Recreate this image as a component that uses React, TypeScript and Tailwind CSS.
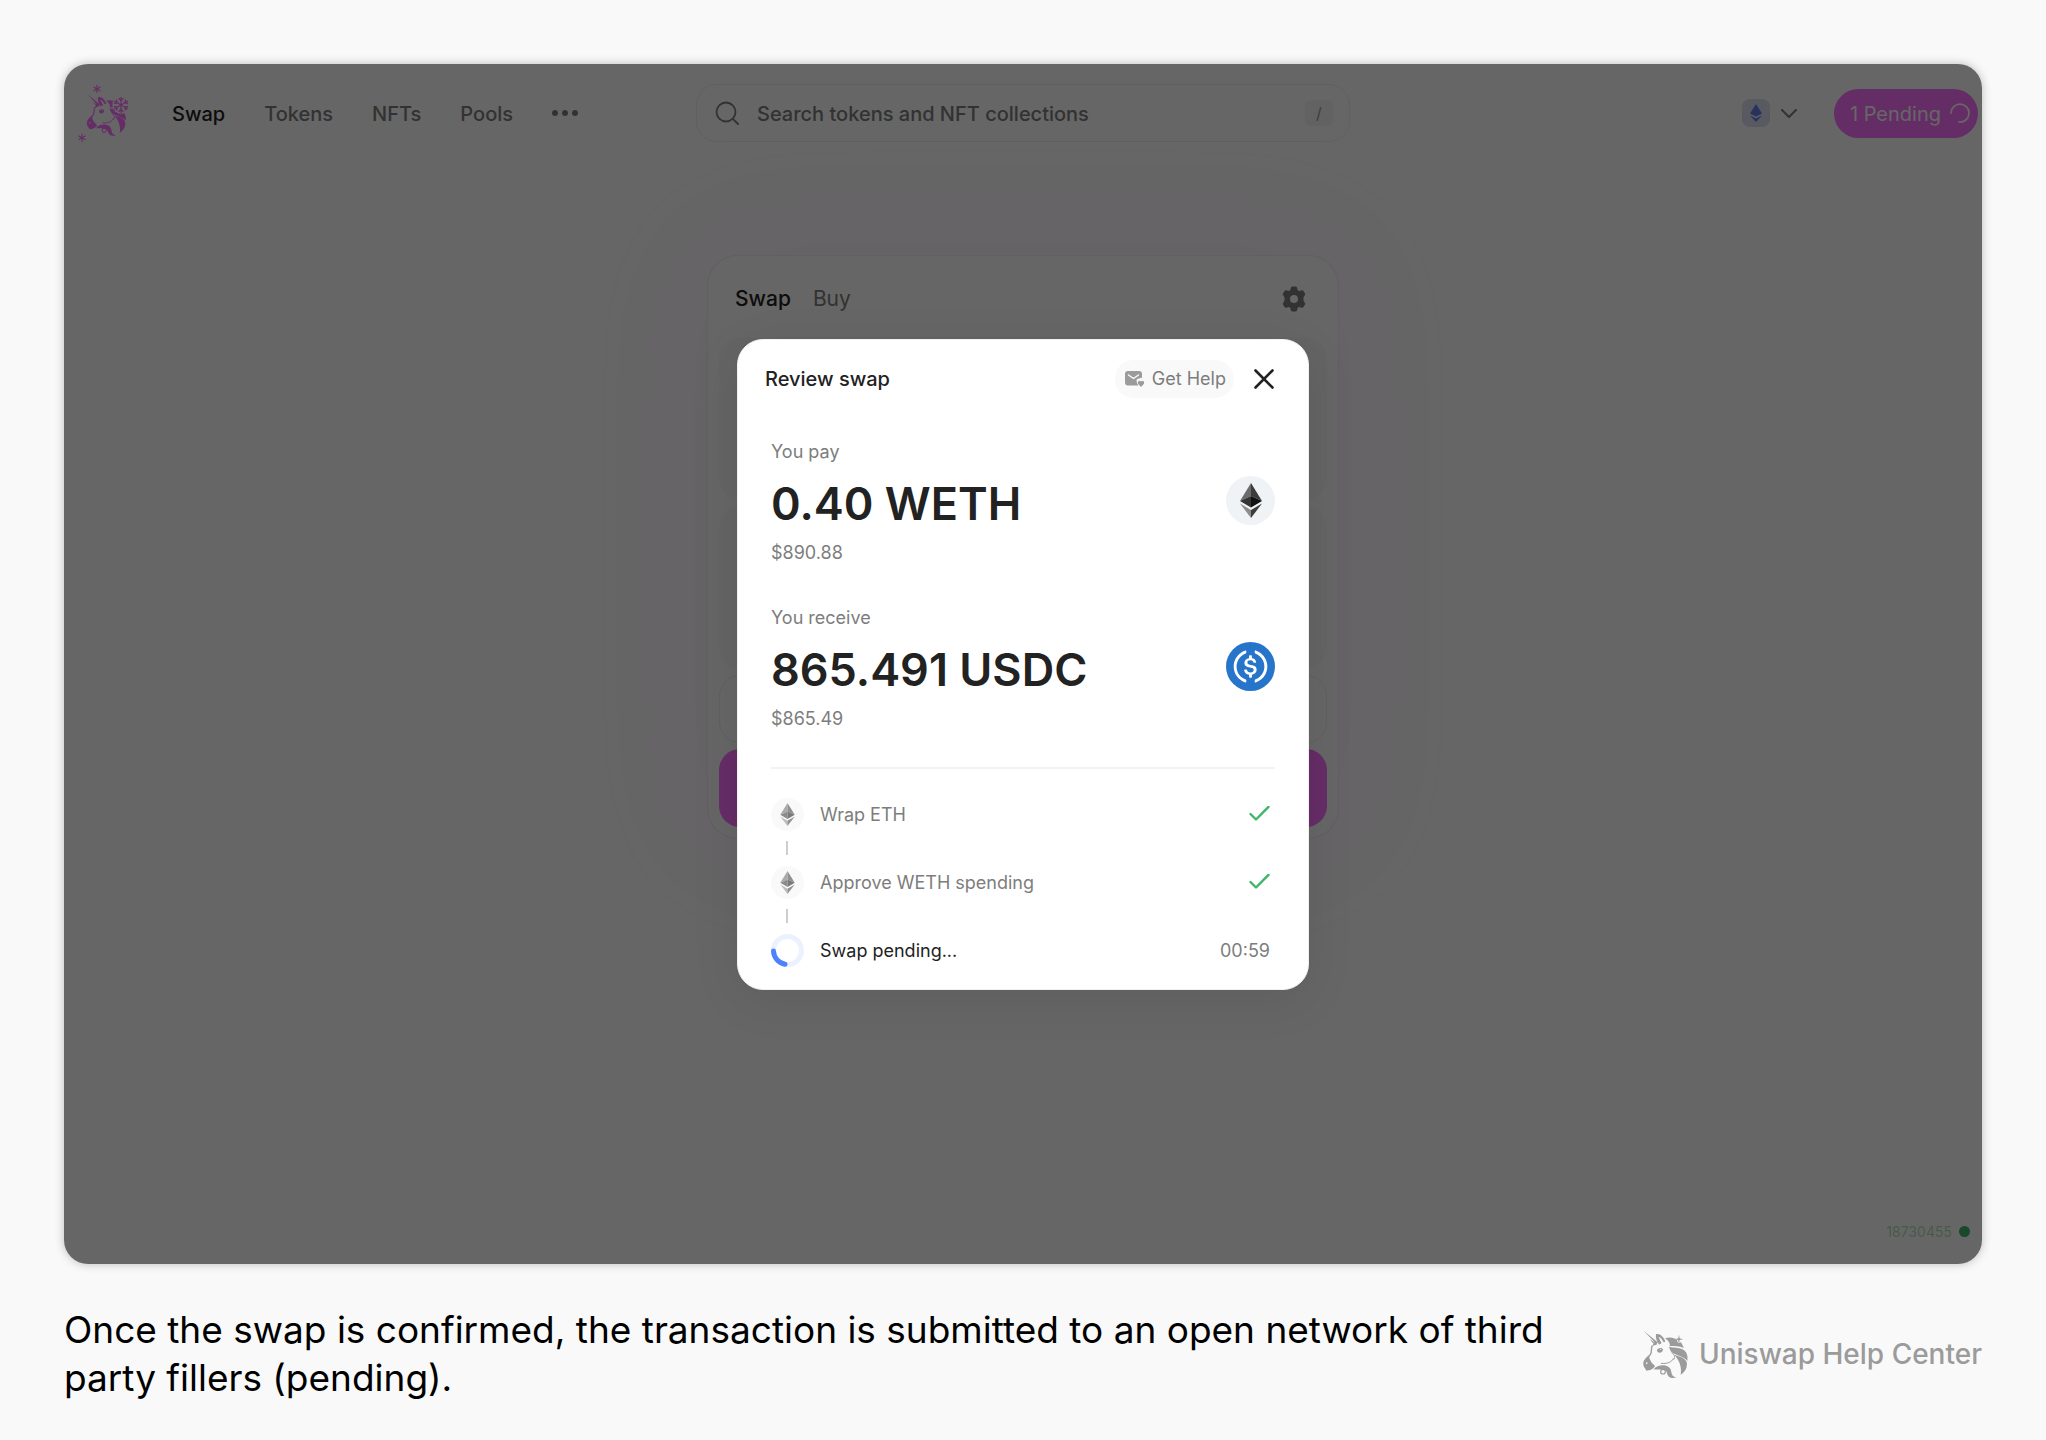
import type { ReactNode } from 'react';

interface Amount {
  label: string;
  amount: string;
  fiat: string;
  icon: ReactNode;
}

interface Step {
  title: string;
  status: 'done' | 'pending';
}

const navLinks = ['Swap', 'Tokens', 'NFTs', 'Pools'];

function UnicornShapes() {
  return (
    <g fill="currentColor">
      <path d="M20 14 L62 49 L58 57 C52 57 48 59 45 63 C46 58 48 55 50 53 C46 49 42 43 38 38 C43 42 48 47 53 49 Z" />
      <path d="M57 25 C68 21 80 32 85 47 L80 49 C75 39 70 34 65 33 C67 39 70 45 74 51 L66 56 C59 46 55 36 57 25 Z" />
      <path
        d="M46 59 C41 68 45 76 41 84 C37 92 26 97 22 108"
        fill="none"
        stroke="currentColor"
        strokeWidth="4"
      />
      <path
        fillRule="evenodd"
        d="M38 86 C26 95 17 104 19 116 C20 124 25 126 28 134 C38 134 50 129 54 120 C48 113 43 111 40 103 C37 97 36 93 38 86 Z M30 108 C33 110 31 114 28 115 C26 112 27 110 30 108 Z"
      />
      <path
        fillRule="evenodd"
        d="M60 72 C63 65 74 63 78 70 C78 77 73 80 68 80 C63 80 60 77 60 72 Z M71 69 A2 1.500 0 1 0 71 72 A2 1.500 0 1 0 71 69 Z"
      />
      <path
        d="M72 112 C90 114 104 109 109 97 M110 101 C115 92 113 86 104 80"
        fill="none"
        stroke="currentColor"
        strokeWidth="3"
      />
      <path d="M84 37 C98 32 112 35 120 42 L123 51 L132 49 L141 66 C126 60 112 60 98 60 C100 50 92 42 84 37 Z" />
      <path d="M126 26 L128 37 L138 40 L128 42 L126 53 L123 42 L114 39 L124 37 Z" />
      <path d="M96 62 C112 67 136 61 147 79 C152 88 152 96 151 105 C140 91 118 89 104 79 C100 74 98 69 96 62 Z" />
      <path d="M112 87 C130 91 144 97 149 108 C152 122 146 137 131 146 C135 124 127 102 112 87 Z" />
      <path d="M50 130 C58 119 74 116 87 119 C98 122 102 129 103 139 C104 147 108 153 118 154 C104 160 92 153 90 141 C88 134 84 131 79 131 C68 129 60 132 50 130 Z" />
      <circle cx="78" cy="137" r="7" fill="none" stroke="currentColor" strokeWidth="3.500" />
    </g>
  );
}

function Snowflake({ x, y, r }: { x: number; y: number; r: number }) {
  const large = r > 15;
  return (
    <g transform={`translate(${x} ${y}) scale(${r / 10})`} stroke="currentColor" strokeWidth={large ? 1.6 : 3} fill="none">
      {[0, 60, 120, 180, 240, 300].map((a) => (
        <path key={a} transform={`rotate(${a})`} d={large ? 'M0 0V-10M-3 -8.5L0 -5.5L3 -8.5' : 'M0 0V-10'} />
      ))}
    </g>
  );
}

function HolidayLogo() {
  return (
    <svg viewBox="0 0 210 225" className="h-[75px] w-[70px] text-[#fc72ff]" aria-hidden="true">
      <mask id="flake-gap">
        <rect width="210" height="225" fill="#fff" />
        <circle cx="153" cy="87" r="26" fill="#000" />
      </mask>
      <g mask="url(#flake-gap)">
        <g transform="translate(34 42) scale(.88)">
          <UnicornShapes />
        </g>
      </g>
      <Snowflake x={153} y={87} r={24} />
      <Snowflake x={81} y={39} r={12} />
      <Snowflake x={36} y={185} r={12} />
    </svg>
  );
}

function EthDiamond({ className }: { className: string }) {
  return (
    <svg viewBox="0 0 22 35" className={className} aria-hidden="true">
      <path d="M11 0 L0 18 L11 13 Z" fill="#6b6b6b" />
      <path d="M11 0 L22 18 L11 13 Z" fill="#3c3c3b" />
      <path d="M0 18 L11 13 V24.500 Z" fill="#343434" />
      <path d="M22 18 L11 13 V24.500 Z" fill="#111111" />
      <path d="M0 20.500 L11 27 V35 Z" fill="#8c8c8c" />
      <path d="M22 20.500 L11 27 V35 Z" fill="#3c3c3b" />
    </svg>
  );
}

function UsdcIcon() {
  return (
    <svg viewBox="0 0 32 32" className="size-[49px]" aria-hidden="true">
      <circle cx="16" cy="16" r="16" fill="#2775ca" />
      <path
        fill="#fff"
        d="M20.022 18.124c0-2.124-1.280-2.852-3.840-3.156-1.828-.243-2.193-.728-2.193-1.578 0-.85.61-1.396 1.828-1.396 1.097 0 1.707.364 2.011 1.275a.458.458 0 00.427.303h.975a.416.416 0 00.427-.425v-.06a3.040 3.040 0 00-2.743-2.489V9.142c0-.243-.183-.425-.487-.486h-.915c-.243 0-.426.182-.487.486v1.396c-1.829.242-2.986 1.456-2.986 2.974 0 2.002 1.218 2.791 3.778 3.095 1.707.303 2.255.668 2.255 1.639 0 .97-.853 1.638-2.011 1.638-1.585 0-2.133-.667-2.316-1.578-.06-.242-.244-.364-.427-.364h-1.036a.416.416 0 00-.426.425v.06c.243 1.518 1.219 2.610 3.230 2.914v1.457c0 .242.183.425.487.485h.915c.243 0 .426-.182.487-.485V21.340c1.829-.303 3.047-1.578 3.047-3.217z"
      />
      <path
        fill="#fff"
        d="M12.892 24.497c-4.754-1.700-7.192-6.980-5.424-11.653.914-2.550 2.925-4.491 5.424-5.402.244-.121.365-.303.365-.607v-.85c0-.242-.121-.424-.365-.485-.061 0-.183 0-.244.060a10.895 10.895 0 00-7.130 13.717c1.096 3.400 3.717 6.010 7.130 7.102.244.121.488 0 .548-.243.061-.060.061-.122.061-.243v-.850c0-.182-.182-.424-.365-.546zm6.460-18.936c-.244-.122-.488 0-.548.242-.061.061-.061.122-.061.243v.850c0 .243.182.485.365.607 4.754 1.700 7.192 6.980 5.424 11.653-.914 2.550-2.925 4.491-5.424 5.402-.244.121-.365.303-.365.607v.850c0 .242.121.424.365.485.061 0 .183 0 .244-.060a10.895 10.895 0 007.130-13.717c-1.096-3.460-3.778-6.070-7.130-7.162z"
      />
    </svg>
  );
}

const amounts: Amount[] = [
  {
    label: 'You pay',
    amount: '0.40 WETH',
    fiat: '$890.88',
    icon: (
      <span className="flex size-[49px] items-center justify-center rounded-full bg-[#eff3f6]">
        <EthDiamond className="h-[35px] w-[22px]" />
      </span>
    ),
  },
  { label: 'You receive', amount: '865.491 USDC', fiat: '$865.49', icon: <UsdcIcon /> },
];

const steps: Step[] = [
  { title: 'Wrap ETH', status: 'done' },
  { title: 'Approve WETH spending', status: 'done' },
  { title: 'Swap pending...', status: 'pending' },
];

function Header() {
  return (
    <header className="grid h-[98px] grid-cols-[1fr_654px_1fr] items-center">
      <div className="flex items-center pl-[6px]">
        <HolidayLogo />
        <nav className="ml-8 flex items-center gap-[39px] text-[20px] font-medium text-[#7d7d7d]">
          {navLinks.map((link) => (
            <a key={link} href="#" className={link === 'Swap' ? 'pt-[2px] text-[#222222]' : 'pt-[2px]'}>
              {link}
            </a>
          ))}
          <button type="button" aria-label="More" className="flex gap-1">
            <span className="size-[6px] rounded-full bg-[#7d7d7d]" />
            <span className="size-[6px] rounded-full bg-[#7d7d7d]" />
            <span className="size-[6px] rounded-full bg-[#7d7d7d]" />
          </button>
        </nav>
      </div>

      <label className="flex h-[58px] items-center rounded-[21px] border border-[#22222212] pr-4 pl-[18px]">
        <svg viewBox="0 0 24 24" className="size-6 shrink-0 text-[#7d7d7d]" fill="none" stroke="currentColor" strokeWidth="1.8">
          <circle cx="11" cy="11" r="9.500" />
          <path d="M18 18 L23 23" strokeLinecap="round" />
        </svg>
        <input
          type="text"
          aria-label="Search tokens and NFT collections"
          placeholder="Search tokens and NFT collections"
          className="ml-[18px] min-w-0 flex-1 bg-transparent pt-[2px] text-[20px] font-medium outline-none placeholder:text-[#7d7d7d]"
        />
        <kbd className="flex h-[26px] w-7 items-center justify-center rounded-md bg-[#2222220d] font-[Inter] text-base text-[#9b9b9b]">/</kbd>
      </label>

      <div className="flex items-center justify-end pr-1">
        <button type="button" aria-label="Ethereum network" className="flex items-center gap-[11px]">
          <span className="flex size-7 items-center justify-center rounded-lg bg-[#dcdff2]">
            <svg viewBox="0 0 12 18" className="h-[18px] w-3" fill="#627eea">
              <path d="M6 0 L12 9.500 L6 12.500 L0 9.500 Z" />
              <path d="M0 11.500 L6 14.500 L12 11.500 L6 18 Z" />
            </svg>
          </span>
          <svg viewBox="0 0 16 9" className="h-[9px] w-4" fill="none" stroke="#7d7d7d" strokeWidth="2" strokeLinecap="round" strokeLinejoin="round">
            <path d="M1 1 L8 8 L15 1" />
          </svg>
        </button>
        <button
          type="button"
          className="ml-[37px] flex h-[49px] w-36 items-center justify-end gap-[9px] rounded-full bg-[#fc72ff] pr-2 text-[20px] whitespace-nowrap text-white"
        >
          <span className="pt-[2px]">1 Pending</span>
          <svg viewBox="0 0 20 20" className="size-5" fill="none" stroke="currentColor" strokeWidth="1.8" strokeLinecap="round">
            <path d="M1 10 A9 9 0 1 1 9 19" />
          </svg>
        </button>
      </div>
    </header>
  );
}

function SwapCard() {
  return (
    <section className="mx-auto mt-[93px] flex w-[632px] flex-col gap-[6px] rounded-[31px] border border-[#22222212] bg-white px-[11px] pb-[11px] shadow-[0_0_130px_20px_#fc72ff16]">
      <div className="flex h-[75px] items-center pt-[10px] pr-5 pl-4 text-[21px] font-medium">
        <button type="button" className="text-[#222222]">Swap</button>
        <button type="button" className="ml-[22px] font-normal text-[#7d7d7d]">Buy</button>
        <button type="button" aria-label="Settings" className="ml-auto">
          <svg viewBox="0 0 26 26" className="size-[26px]">
            <path
              fill="#7d7d7d"
              fillRule="evenodd"
              d="M10 1.500 Q10.300 .5 11.500 .5 H14.500 Q15.700 .5 16 1.500 L16.800 4.200 L18 4.900 L20.800 4.200 Q21.900 4 22.500 4.900 L24 7.500 Q24.600 8.500 23.800 9.300 L22.500 11.300 V14.700 L23.800 16.700 Q24.600 17.500 24 18.500 L22.500 21.100 Q21.900 22 20.800 21.800 L18 21.100 L16.800 21.800 L16 24.500 Q15.700 25.500 14.500 25.500 H11.500 Q10.300 25.500 10 24.500 L9.200 21.800 L8 21.100 L5.200 21.800 Q4.100 22 3.500 21.100 L2 18.500 Q1.400 17.500 2.200 16.700 L3.500 14.700 V11.300 L2.200 9.300 Q1.400 8.500 2 7.500 L3.500 4.900 Q4.100 4 5.200 4.200 L8 4.900 L9.200 4.200 Z M13 9 A4 4 0 1 0 13 17 A4 4 0 1 0 13 9 Z"
            />
          </svg>
        </button>
      </div>
      <div className="h-[163px] rounded-[21px] bg-[#f9f9f9]" />
      <div className="h-[163px] rounded-[21px] bg-[#f9f9f9]" />
      <div className="h-[68px] rounded-[21px] border border-[#22222212]" />
      <button type="button" aria-label="Swap" className="h-[78px] rounded-[21px] bg-[#fc72ff]" />
    </section>
  );
}

function StepRow({ step, last }: { step: Step; last: boolean }) {
  const done = step.status === 'done';
  return (
    <li>
      <div className="flex h-[33px] items-center pr-[5px] text-[18px]">
        {done ? (
          <span className="flex size-[33px] items-center justify-center rounded-full bg-[#f9f9f9]">
            <EthDiamond className="h-[23px] w-[15px] opacity-55" />
          </span>
        ) : (
          <svg viewBox="0 0 33 33" className="size-[33px]" fill="none" strokeWidth="5">
            <circle cx="16.500" cy="16.500" r="14" stroke="#ebf1ff" />
            <path d="M2.500 17 A14 14 0 0 0 14 30.300" stroke="#4c82fb" strokeLinecap="round" />
          </svg>
        )}
        <span className={`ml-4 ${done ? 'text-[#7d7d7d]' : 'text-[#222222]'}`}>{step.title}</span>
        {done ? (
          <svg viewBox="0 0 21 16" className="ml-auto h-4 w-[21px]" fill="none" stroke="#40b66b" strokeWidth="2.400" strokeLinecap="round" strokeLinejoin="round">
            <path d="M1.500 8 L7 13.500 L19.500 .8" />
          </svg>
        ) : (
          <time className="ml-auto text-[#7d7d7d]">00:59</time>
        )}
      </div>
      {!last && (
        <div className="flex h-[35px] w-8 items-center justify-center">
          <span className="h-[14px] w-[2px] bg-[#cecece]" />
        </div>
      )}
    </li>
  );
}

function ReviewModal() {
  return (
    <div
      role="dialog"
      aria-label="Review swap"
      className="w-[572px] rounded-[26px] border border-[#f0f0f0] bg-white pb-[22px] shadow-[0_10px_50px_#00000014]"
    >
      <div className="flex h-[78px] items-center pr-[34px] pl-[27px]">
        <h2 className="text-[20px] font-medium text-[#222222]">Review swap</h2>
        <button
          type="button"
          className="ml-auto flex h-[38px] items-center gap-[7px] rounded-full bg-[#f9f9f9] pr-2 pl-[10px] text-[18px] text-[#7d7d7d]"
        >
          <svg viewBox="0 0 20 16" className="h-4 w-5" fill="none">
            <path fill="#9b9b9b" d="M3 0 H14 Q17 0 17 3 V7 Q15.500 6.500 14.500 7.500 Q12 7 11.500 9.500 Q11.500 12 13.500 14.500 H3 Q0 14.500 0 11.500 V3 Q0 0 3 0 Z" />
            <path stroke="#f9f9f9" strokeWidth="1.500" strokeLinecap="round" strokeLinejoin="round" d="M3.500 4 L8.500 7.500 L13.500 4" />
            <path fill="#9b9b9b" d="M16 16 L13.200 13 Q12.400 11.600 13.200 10.400 Q14.600 9 16 10.600 Q17.400 9 18.800 10.400 Q19.600 11.600 18.800 13 Z" />
          </svg>
          Get Help
        </button>
        <button type="button" aria-label="Close" className="ml-5">
          <svg viewBox="0 0 20 20" className="size-5" stroke="#222222" strokeWidth="2.600" strokeLinecap="round">
            <path d="M1.500 1.500 L18.500 18.500 M18.500 1.500 L1.500 18.500" />
          </svg>
        </button>
      </div>

      <div className="flex flex-col gap-[38px] px-[33px] pt-[22px]">
        {amounts.map((item) => (
          <div key={item.label} className="text-[18px] text-[#7d7d7d]">
            <p className="leading-6">{item.label}</p>
            <div className="flex h-[74px] items-center justify-between">
              <p className="pt-[6px] text-[45px] font-semibold text-[#222222]">{item.amount}</p>
              {item.icon}
            </div>
            <p className="leading-[30px]">{item.fiat}</p>
          </div>
        ))}
      </div>

      <hr className="mx-[33px] mt-[33px] border-t-2 border-[#f2f2f2]" />

      <ol className="mt-[29px] px-[33px]">
        {steps.map((step, i) => (
          <StepRow key={step.title} step={step} last={i === steps.length - 1} />
        ))}
      </ol>
    </div>
  );
}

export default function App() {
  return (
    <div className="min-h-screen bg-[#f9f9f9] p-16 pb-0 font-[Inter,sans-serif]">
      <main className="relative h-[1200px] overflow-hidden rounded-3xl bg-white shadow-[0_0_10px_#00000040]">
        <Header />
        <SwapCard />
        <div className="absolute right-3 bottom-[22px] flex items-center gap-[7px] text-[14px] text-[#76d191]">
          <span className="opacity-60">18730455</span>
          <span className="size-[11px] rounded-full bg-[#40b66b]" />
        </div>
        <div className="absolute inset-0 flex items-center justify-center bg-black/60">
          <ReviewModal />
        </div>
      </main>

      <footer className="flex items-center justify-between pt-[42px]">
        <p className="max-w-[1500px] text-[37px] leading-[48px] text-black">
          Once the swap is confirmed, the transaction is submitted to an open network of third party fillers (pending).
        </p>
        <div className="flex items-center gap-[6px] text-[#9b9b9b]">
          <svg viewBox="0 0 168 168" className="size-14" aria-hidden="true">
            <UnicornShapes />
          </svg>
          <span className="text-[28px] font-medium whitespace-nowrap">Uniswap Help Center</span>
        </div>
      </footer>
    </div>
  );
}
